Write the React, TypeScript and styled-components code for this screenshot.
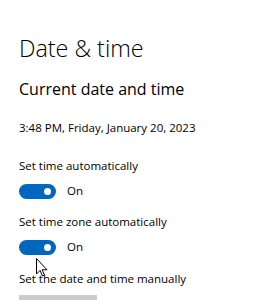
import React from "react";
import styled, { createGlobalStyle } from "styled-components";

const Global = createGlobalStyle`
  html, body { margin: 0; padding: 0; background: #ffffff; }
  body { font-family: "Open Sans", "Noto Sans", sans-serif; color: #000; overflow: hidden; }
`;

const Page = styled.div`
  position: relative;
  width: 269px;
  height: 300px;
  overflow: hidden;
  padding: 0 0 0 19px;
  box-sizing: border-box;
`;

const Title = styled.h1`
  margin: 0;
  padding-top: 32px;
  font-size: 23.3px;
  font-weight: 300;
  line-height: 32px;
  color: #000;
`;

const Subtitle = styled.h2`
  margin: 14px 0 0;
  font-size: 16px;
  font-weight: 400;
  line-height: 22px;
  color: #000;
`;

const DateLine = styled.div`
  margin-top: 20px;
  font-size: 11.5px;
  line-height: 16px;
`;

const Group = styled.div<{ $gap: number }>`
  margin-top: ${(p) => p.$gap}px;
  display: flex;
  flex-direction: column;
`;

const Label = styled.div`
  font-size: 11.5px;
  line-height: 16px;
`;

const ToggleRow = styled.div`
  display: flex;
  align-items: center;
  gap: 11px;
  margin-top: 9px;
`;

const Track = styled.div`
  width: 37px;
  height: 15px;
  border-radius: 8px;
  background: #0067c0;
  position: relative;
  flex: none;
`;

const Knob = styled.span`
  position: absolute;
  right: 5px;
  top: 4px;
  width: 7px;
  height: 7px;
  border-radius: 50%;
  background: #fff;
`;

const ToggleText = styled.span`
  font-size: 11.5px;
  line-height: 16px;
`;

const GrayBar = styled.div`
  margin-top: 8px;
  width: 78px;
  height: 20px;
  background: #cccccc;
`;

const Cursor = styled.svg`
  position: absolute;
  left: 36px;
  top: 258px;
`;

function Toggle() {
  return (
    <ToggleRow>
      <Track>
        <Knob />
      </Track>
      <ToggleText>On</ToggleText>
    </ToggleRow>
  );
}

export default function App() {
  return (
    <>
      <Global />
      <Page>
        <Title>Date &amp; time</Title>
        <Subtitle>Current date and time</Subtitle>
        <DateLine>3:48 PM, Friday, January 20, 2023</DateLine>
        <Group $gap={22}>
          <Label>Set time automatically</Label>
          <Toggle />
        </Group>
        <Group $gap={15}>
          <Label>Set time zone automatically</Label>
          <Toggle />
        </Group>
        <Group $gap={16}>
          <Label>Set the date and time manually</Label>
          <GrayBar />
        </Group>
        <Cursor width="12" height="19" viewBox="0 0 12 19">
          <path
            d="M0.5 0.5 L0.5 16 L4 12.5 L6.5 18 L8.5 17 L6 11.8 L11 11.8 Z"
            fill="#fff"
            stroke="#000"
            strokeWidth="1"
            strokeLinejoin="round"
          />
        </Cursor>
      </Page>
    </>
  );
}
